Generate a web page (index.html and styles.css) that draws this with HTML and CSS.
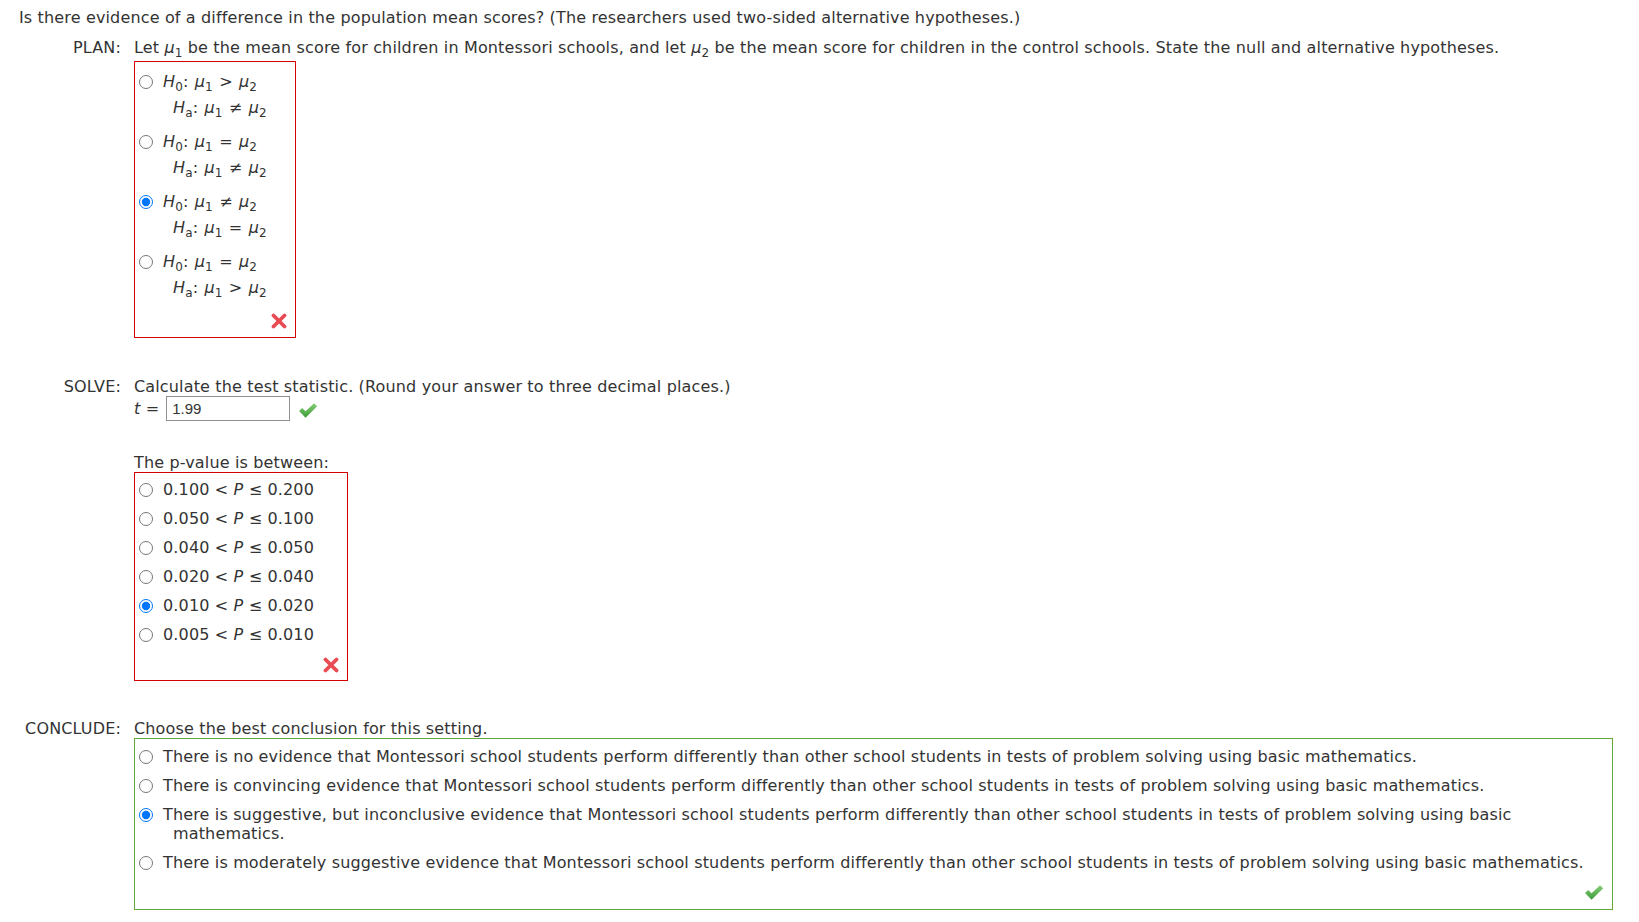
FILE: index.html
```html
<!DOCTYPE html>
<html lang="en">
<head>
<meta charset="utf-8">
<title>Montessori test</title>
<link rel="stylesheet" href="styles.css">
</head>
<body>
<div class="page">
  <p class="q">Is there evidence of a difference in the population mean scores? (The researchers used two-sided alternative hypotheses.)</p>

  <div class="row row-plan">
    <div class="label">PLAN:</div>
    <div class="content">
      <div class="line">Let <i class="m">μ</i><sub>1</sub> be the mean score for children in Montessori schools, and let <i class="m">μ</i><sub>2</sub> be the mean score for children in the control schools. State the null and alternative hypotheses.</div>
      <div class="box box-red box-hyp">
        <label class="opt hyp"><input type="radio" name="hyp"><i>H</i><sub>0</sub>: <i class="m">μ</i><sub>1</sub> &gt; <i class="m">μ</i><sub>2</sub><span class="ha"><i>H</i><sub>a</sub>: <i class="m">μ</i><sub>1</sub> ≠ <i class="m">μ</i><sub>2</sub></span></label>
        <label class="opt hyp"><input type="radio" name="hyp"><i>H</i><sub>0</sub>: <i class="m">μ</i><sub>1</sub> = <i class="m">μ</i><sub>2</sub><span class="ha"><i>H</i><sub>a</sub>: <i class="m">μ</i><sub>1</sub> ≠ <i class="m">μ</i><sub>2</sub></span></label>
        <label class="opt hyp"><input type="radio" name="hyp" checked><i>H</i><sub>0</sub>: <i class="m">μ</i><sub>1</sub> ≠ <i class="m">μ</i><sub>2</sub><span class="ha"><i>H</i><sub>a</sub>: <i class="m">μ</i><sub>1</sub> = <i class="m">μ</i><sub>2</sub></span></label>
        <label class="opt hyp"><input type="radio" name="hyp"><i>H</i><sub>0</sub>: <i class="m">μ</i><sub>1</sub> = <i class="m">μ</i><sub>2</sub><span class="ha"><i>H</i><sub>a</sub>: <i class="m">μ</i><sub>1</sub> &gt; <i class="m">μ</i><sub>2</sub></span></label>
        <div class="mark">
          <svg class="icon-x" width="16" height="16" viewBox="0 0 16 16"><path d="M2.5 2.5 L13.5 13.5 M13.5 2.5 L2.5 13.5" stroke="#ea4a52" stroke-width="3.8" stroke-linecap="round" fill="none"/></svg>
        </div>
      </div>
    </div>
  </div>

  <div class="row row-solve">
    <div class="label">SOLVE:</div>
    <div class="content">
      <div class="line">Calculate the test statistic. (Round your answer to three decimal places.)</div>
      <div class="tline"><span><i>t</i> =</span><span class="input">1.99</span>
        <svg class="icon-check" width="20" height="17" viewBox="0 0 19 16"><defs><linearGradient id="g1" x1="0" y1="0" x2="0" y2="1"><stop offset="0" stop-color="#86cf76"/><stop offset="1" stop-color="#3f9c3a"/></linearGradient></defs><path d="M1 8.5 L4 5.6 L7.2 8.7 L15.2 1 L18.2 4 L7.2 14.8 Z" fill="url(#g1)"/></svg>
      </div>
      <div class="line pline">The p-value is between:</div>
      <div class="box box-red box-p">
        <label class="opt"><input type="radio" name="p">0.100 &lt; <i>P</i> ≤ 0.200</label>
        <label class="opt"><input type="radio" name="p">0.050 &lt; <i>P</i> ≤ 0.100</label>
        <label class="opt"><input type="radio" name="p">0.040 &lt; <i>P</i> ≤ 0.050</label>
        <label class="opt"><input type="radio" name="p">0.020 &lt; <i>P</i> ≤ 0.040</label>
        <label class="opt"><input type="radio" name="p" checked>0.010 &lt; <i>P</i> ≤ 0.020</label>
        <label class="opt"><input type="radio" name="p">0.005 &lt; <i>P</i> ≤ 0.010</label>
        <div class="mark">
          <svg class="icon-x" width="16" height="16" viewBox="0 0 16 16"><path d="M2.5 2.5 L13.5 13.5 M13.5 2.5 L2.5 13.5" stroke="#ea4a52" stroke-width="3.8" stroke-linecap="round" fill="none"/></svg>
        </div>
      </div>
    </div>
  </div>

  <div class="row row-conclude">
    <div class="label">CONCLUDE:</div>
    <div class="content">
      <div class="line">Choose the best conclusion for this setting.</div>
      <div class="box box-green box-c">
        <label class="opt"><input type="radio" name="c">There is no evidence that Montessori school students perform differently than other school students in tests of problem solving using basic mathematics.</label>
        <label class="opt"><input type="radio" name="c">There is convincing evidence that Montessori school students perform differently than other school students in tests of problem solving using basic mathematics.</label>
        <label class="opt"><input type="radio" name="c" checked>There is suggestive, but inconclusive evidence that Montessori school students perform differently than other school students in tests of problem solving using basic mathematics.</label>
        <label class="opt"><input type="radio" name="c">There is moderately suggestive evidence that Montessori school students perform differently than other school students in tests of problem solving using basic mathematics.</label>
        <div class="mark">
          <svg class="icon-check" width="20" height="17" viewBox="0 0 19 16"><defs><linearGradient id="g2" x1="0" y1="0" x2="0" y2="1"><stop offset="0" stop-color="#86cf76"/><stop offset="1" stop-color="#3f9c3a"/></linearGradient></defs><path d="M1 8.5 L4 5.6 L7.2 8.7 L15.2 1 L18.2 4 L7.2 14.8 Z" fill="url(#g2)"/></svg>
        </div>
      </div>
    </div>
  </div>
</div>
</body>
</html>
```

FILE: styles.css
```css
html, body {
  margin: 0;
  padding: 0;
  background: #ffffff;
}

body {
  font-family: "DejaVu Sans", Verdana, sans-serif;
  font-size: 16px;
  letter-spacing: 0.15px;
  color: #333333;
}

.page {
  padding: 8px 26px 0 0;
}

.q {
  margin: 0;
  padding-left: 19px;
  line-height: 19px;
}

.row {
  display: grid;
  grid-template-columns: 121px 1fr;
  column-gap: 13px;
}

.row-plan { margin-top: 11px; }
.row-solve { margin-top: 39px; }
.row-conclude { margin-top: 38px; }

.label {
  text-align: right;
  line-height: 19px;
  white-space: nowrap;
}

.content {
  min-width: 0;
}

.line {
  line-height: 19px;
}

sub {
  font-size: 12px;
  line-height: 0;
  vertical-align: -4px;
  font-style: normal;
}

i {
  font-style: italic;
}

.box {
  box-sizing: border-box;
  border: 1px solid;
}

.box-red { border-color: #d50000; }
.box-green { border-color: #64a83c; }

.box-hyp {
  width: 162px;
  margin-top: 4px;
  padding: 3px 0 8px 0;
}

.box-p {
  width: 214px;
  padding: 2px 0 7px 0;
}

.box-c {
  width: 100%;
  padding: 3px 8px 12px 0;
}

.opt {
  display: block;
  padding: 5px 0 5px 38px;
  text-indent: -34px;
  line-height: 19px;
}

.opt input {
  width: 14px;
  height: 14px;
  margin: 0 10px 0 0;
  vertical-align: -2px;
  text-indent: 0;
}

.hyp {
  padding: 4px 0 4px 38px;
  line-height: 26px;
  word-spacing: 1px;
}

.ha {
  display: block;
  text-indent: 0;
}

.m {
  font-style: italic;
}

.mark {
  display: flex;
  justify-content: flex-end;
  padding-right: 8px;
  margin-top: 8px;
  height: 16px;
}

.box-c .mark {
  margin-top: 3px;
  padding-right: 0;
  height: 17px;
}

.pline {
  margin-top: 32px;
}

.tline {
  display: flex;
  align-items: center;
  height: 25px;
}

.input {
  box-sizing: border-box;
  width: 124px;
  height: 25px;
  margin-left: 7px;
  padding: 0 5px;
  border: 1px solid #8f8f8f;
  font-family: "Liberation Sans", Arial, sans-serif;
  font-size: 15px;
  letter-spacing: 0;
  line-height: 23px;
  color: #333333;
}

.icon-check {
  margin-left: 8px;
  margin-top: 4px;
}
```
